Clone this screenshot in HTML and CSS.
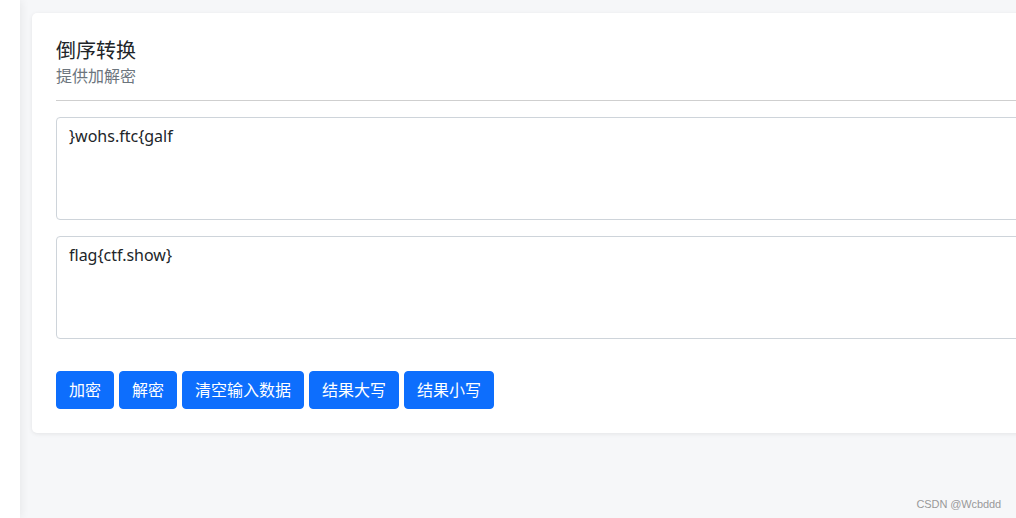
FILE: index.html
```html
<!DOCTYPE html>
<html lang="zh-CN">
<head>
  <meta charset="UTF-8" />
  <title>倒序转换</title>
  <link rel="stylesheet" href="styles.css">
</head>
<body>
  <div class="layout">
    <aside class="sidebar"></aside>
    <main class="main">
      <div class="card">
        <h2 class="title">倒序转换</h2>
        <div class="subtitle">提供加解密</div>
        <div class="divider"></div>
        <textarea class="box">}wohs.ftc{galf</textarea>
        <textarea class="box">flag{ctf.show}</textarea>
        <div class="actions">
          <button class="btn">加密</button>
          <button class="btn">解密</button>
          <button class="btn">清空输入数据</button>
          <button class="btn">结果大写</button>
          <button class="btn">结果小写</button>
        </div>
      </div>
    </main>
  </div>
  <div class="watermark">CSDN @Wcbddd</div>
</body>
</html>
```

FILE: styles.css
```css
* { box-sizing: border-box; }
html, body {
  height: 100%;
}
body {
  margin: 0;
  font-family: "Noto Sans", "Noto Sans CJK SC", sans-serif;
  background-color: #f6f7f9;
  color: #212529;
  overflow: hidden;
  position: relative;
}
.layout {
  display: flex;
  height: 100%;
}
.sidebar {
  flex: 0 0 20px;
  background: #fff;
  box-shadow: 2px 0 8px rgba(0, 0, 0, 0.06);
}
.main {
  flex: 1;
  padding: 13px 0 0 12px;
  overflow: hidden;
}
.card {
  width: 1100px;
  background: #fff;
  border-radius: 5px;
  box-shadow: 0 1px 4px rgba(0, 0, 0, 0.08);
  padding: 24px 24px 24px 24px;
}
.title {
  margin: 0;
  font-size: 20px;
  font-weight: 400;
  line-height: 28px;
  color: #212529;
}
.subtitle {
  font-size: 16px;
  line-height: 22px;
  color: #6c757d;
}
.divider {
  margin: 13px 0 16px;
  border-top: 1px solid #cfcfcf;
}
.box {
  display: block;
  width: 100%;
  height: 103px;
  margin-bottom: 16px;
  padding: 6px 12px;
  border: 1px solid #ced4da;
  border-radius: 4px;
  font-family: inherit;
  font-size: 16px;
  line-height: 24px;
  color: #212529;
  resize: none;
  outline: none;
}
.actions {
  display: flex;
  gap: 5px;
  margin-top: 32px;
}
.btn {
  padding: 6px 12px;
  height: 38px;
  font-family: inherit;
  font-size: 16px;
  line-height: 24px;
  color: #fff;
  background-color: #0d6efd;
  border: 1px solid #0d6efd;
  border-radius: 4px;
  cursor: pointer;
}
.btn:hover { background-color: #0b5ed7; }
.watermark {
  position: absolute;
  right: 15px;
  bottom: 8px;
  font-family: "Liberation Sans", sans-serif;
  font-size: 11px;
  letter-spacing: -0.1px;
  color: #999;
}
```
